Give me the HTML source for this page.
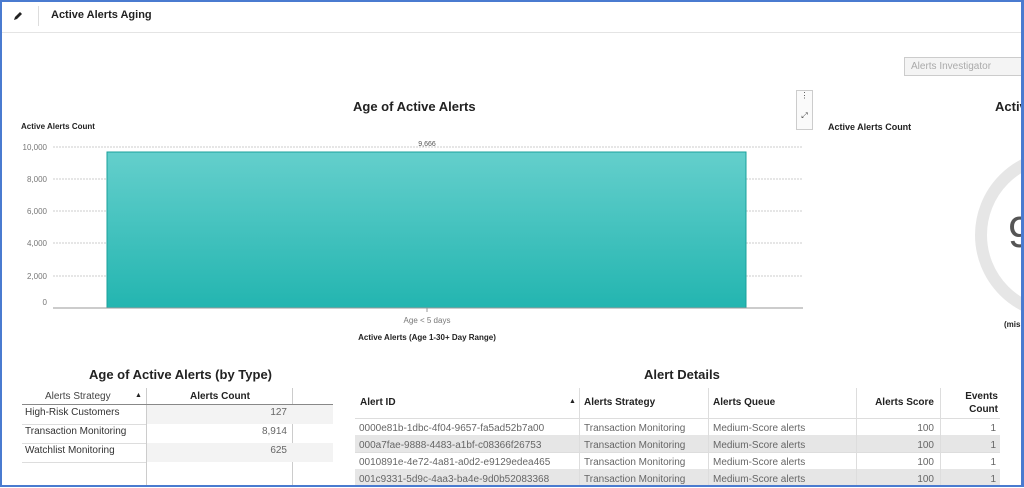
<!DOCTYPE html>
<html><head><style>
*{box-sizing:border-box;margin:0;padding:0}
body{width:1024px;height:487px;overflow:hidden;background:#fff;font-family:"Liberation Sans",sans-serif;color:#222;position:relative}
.frame{position:absolute;left:0;top:0;width:1024px;height:487px;border:2px solid #4a7bd0;border-right:none;pointer-events:none}
.abs{position:absolute}
.t{font-size:10px;color:#666}
table{border-collapse:collapse;font-size:10px}
td,th{white-space:nowrap}
</style></head><body>
<div class="abs" style="left:0;top:0;width:1024px;height:33px;border-bottom:1px solid #e4e4e4"></div>
<svg class="abs" style="left:12px;top:11px" width="11" height="11" viewBox="0 0 11 11"><path d="M2 9 L3 6 L8 1 L10 3 L5 8 Z" fill="#222"/></svg>
<div class="abs" style="left:38px;top:6px;width:1px;height:20px;background:#ddd"></div>
<div class="abs" style="left:51px;top:9px;font-size:11px;font-weight:bold">Active Alerts Aging</div>

<div class="abs" style="left:904px;top:57px;width:120px;height:19px;border:1px solid #ccc;background:#f4f4f4;font-size:10px;color:#aaa;padding:3px 6px">Alerts Investigator</div>

<div class="abs" style="left:353px;top:99px;font-size:13px;font-weight:bold">Age of Active Alerts</div>
<div class="abs" style="left:21px;top:122px;font-size:8px;font-weight:bold">Active Alerts Count</div>
<svg class="abs" style="left:0;top:130px" width="810" height="220">
<g stroke="#ccc" stroke-dasharray="2,1">
<line x1="53" y1="17" x2="803" y2="17"/><line x1="53" y1="49" x2="803" y2="49"/><line x1="53" y1="81" x2="803" y2="81"/><line x1="53" y1="113" x2="803" y2="113"/><line x1="53" y1="146" x2="803" y2="146"/></g>
<defs><linearGradient id="g" x1="0" y1="0" x2="0" y2="1"><stop offset="0" stop-color="#64cfcc"/><stop offset="1" stop-color="#23b5b0"/></linearGradient></defs>
<rect x="107" y="22" width="639" height="156" fill="url(#g)" stroke="#1aa09b"/>
<line x1="53" y1="178" x2="803" y2="178" stroke="#999"/>
<line x1="427" y1="178" x2="427" y2="182" stroke="#999"/>
<g font-size="8" fill="#777" text-anchor="end" font-family="Liberation Sans">
<text x="47" y="20">10,000</text><text x="47" y="52">8,000</text><text x="47" y="84">6,000</text><text x="47" y="116">4,000</text><text x="47" y="149">2,000</text><text x="47" y="175">0</text></g>
<text x="427" y="16" font-size="7" fill="#555" text-anchor="middle">9,666</text>
<text x="427" y="193" font-size="8" fill="#777" text-anchor="middle">Age &lt; 5 days</text>
<text x="427" y="210" font-size="8" fill="#222" font-weight="bold" text-anchor="middle">Active Alerts (Age 1-30+ Day Range)</text>
</svg>
<div class="abs" style="left:796px;top:90px;width:17px;height:40px;border:1px solid #ccc;background:#fafafa;font-size:8px;text-align:center;color:#444;line-height:10px">⋮<br><br>⤢</div>
<div class="abs" style="left:828px;top:122px;font-size:9px;font-weight:bold">Active Alerts Count</div>
<div class="abs" style="left:995px;top:99px;font-size:13px;font-weight:bold">Activ</div>
<svg class="abs" style="left:970px;top:150px" width="54" height="170"><circle cx="90" cy="85" r="79" fill="none" stroke="#e6e6e6" stroke-width="12"/><text x="1008" y="0"/></svg>
<div class="abs" style="left:1008px;top:208px;font-size:44px;color:#555">9</div>
<div class="abs" style="left:1004px;top:320px;font-size:8px;font-weight:bold">(mis</div>
<div class="abs" style="left:1021px;top:0;width:3px;height:487px;background:#4a7bd0"></div>

<div class="abs" style="left:89px;top:367px;font-size:13px;font-weight:bold">Age of Active Alerts (by Type)</div>
<div class="abs" style="left:22px;top:388px;width:311px;height:99px">
<div class="abs" style="left:124px;top:0;width:1px;height:99px;background:#ccc"></div>
<div class="abs" style="left:270px;top:0;width:1px;height:99px;background:#ccc"></div>
<div class="abs" style="left:0;top:16px;width:311px;height:1px;background:#888"></div>
<div class="abs t" style="left:23px;top:3px;color:#444">Alerts Strategy</div>
<div class="abs" style="left:113px;top:4px;font-size:7px">▲</div>
<div class="abs" style="left:168px;top:3px;font-size:10px;font-weight:bold">Alerts Count</div>
<div class="abs" style="left:125px;top:17px;width:186px;height:19px;background:#f3f3f3"></div>
<div class="abs" style="left:125px;top:55px;width:186px;height:19px;background:#f3f3f3"></div>
<div class="abs" style="left:0;top:36px;width:124px;height:1px;background:#ddd"></div>
<div class="abs" style="left:0;top:55px;width:124px;height:1px;background:#ddd"></div>
<div class="abs" style="left:0;top:74px;width:124px;height:1px;background:#ddd"></div>
<div class="abs t" style="left:3px;top:19px;color:#333">High-Risk Customers</div>
<div class="abs t" style="left:3px;top:38px;color:#333">Transaction Monitoring</div>
<div class="abs t" style="left:3px;top:57px;color:#333">Watchlist Monitoring</div>
<div class="abs t" style="left:220px;top:19px;width:45px;text-align:right">127</div>
<div class="abs t" style="left:220px;top:38px;width:45px;text-align:right">8,914</div>
<div class="abs t" style="left:220px;top:57px;width:45px;text-align:right">625</div>
</div>

<div class="abs" style="left:644px;top:367px;font-size:13px;font-weight:bold">Alert Details</div>
<div class="abs" style="left:355px;top:388px;width:645px;height:99px;font-size:10px">
<div class="abs" style="left:0;top:30px;width:645px;height:1px;background:#ddd"></div>
<div class="abs" style="left:0;top:47px;width:645px;height:17px;background:#e6e6e6"></div>
<div class="abs" style="left:0;top:81px;width:645px;height:18px;background:#e6e6e6"></div>
<div class="abs" style="left:0;top:64px;width:645px;height:1px;background:#ddd"></div>
<div class="abs" style="left:224px;top:0;width:1px;height:99px;background:#ddd"></div>
<div class="abs" style="left:353px;top:0;width:1px;height:99px;background:#ddd"></div>
<div class="abs" style="left:501px;top:0;width:1px;height:99px;background:#ddd"></div>
<div class="abs" style="left:585px;top:0;width:1px;height:99px;background:#ddd"></div>
<div class="abs" style="left:5px;top:9px;font-weight:bold">Alert ID</div>
<div class="abs" style="left:214px;top:10px;font-size:7px">▲</div>
<div class="abs" style="left:229px;top:9px;font-weight:bold">Alerts Strategy</div>
<div class="abs" style="left:358px;top:9px;font-weight:bold">Alerts Queue</div>
<div class="abs" style="left:501px;top:9px;width:78px;text-align:right;font-weight:bold">Alerts Score</div>
<div class="abs" style="left:586px;top:2px;width:57px;text-align:right;font-weight:bold;line-height:13px">Events<br>Count</div>
<div class="abs t" style="left:4px;top:32px;line-height:17px">0000e81b-1dbc-4f04-9657-fa5ad52b7a00<br>000a7fae-9888-4483-a1bf-c08366f26753<br>0010891e-4e72-4a81-a0d2-e9129edea465<br>001c9331-5d9c-4aa3-ba4e-9d0b52083368</div>
<div class="abs t" style="left:229px;top:32px;line-height:17px">Transaction Monitoring<br>Transaction Monitoring<br>Transaction Monitoring<br>Transaction Monitoring</div>
<div class="abs t" style="left:358px;top:32px;line-height:17px">Medium-Score alerts<br>Medium-Score alerts<br>Medium-Score alerts<br>Medium-Score alerts</div>
<div class="abs t" style="left:501px;top:32px;width:78px;text-align:right;line-height:17px">100<br>100<br>100<br>100</div>
<div class="abs t" style="left:586px;top:32px;width:55px;text-align:right;line-height:17px">1<br>1<br>1<br>1</div>
</div>
<div class="frame"></div>
</body></html>
